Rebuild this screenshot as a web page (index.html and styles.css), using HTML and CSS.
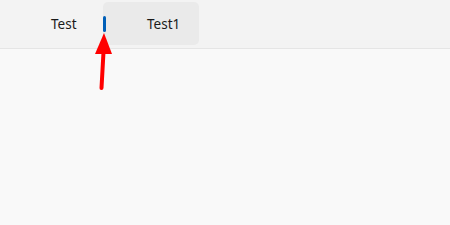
FILE: index.html
```html
<!DOCTYPE html>
<html lang="en">
<head>
    <meta charset="UTF-8">
    <title>Tabs</title>
    <link rel="stylesheet" href="styles.css">
</head>
<body>
    <div class="header">
        <div class="tab">Test</div>
        <div class="tab hover">Test1</div>
        <div class="drop-marker"></div>
    </div>
    <div class="content"></div>

    <svg class="arrow" width="30" height="70" viewBox="0 0 30 70">
        <path d="M16.5 20 L14.5 56" stroke="#ff0000" stroke-width="4" stroke-linecap="round" fill="none"/>
        <path d="M17 1 L8 22 L25 22 Z" fill="#ff0000"/>
    </svg>
</body>
</html>
```

FILE: styles.css
```css
body {
    margin: 0;
    font-family: "Noto Sans", "Open Sans", sans-serif;
    background-color: #f9f9f9;
    color: #1a1a1a;
}
.header {
    position: relative;
    display: flex;
    height: 46px;
    padding: 2px 0 0 7px;
    background-color: #f3f3f3;
    border-bottom: 1px solid #e5e5e5;
}
.tab {
    width: 96px;
    height: 43px;
    padding-left: 44px;
    box-sizing: border-box;
    display: flex;
    align-items: center;
    font-size: 13.5px;
    border-radius: 5px;
}
.tab.hover {
    background-color: #eaeaea;
}
.drop-marker {
    position: absolute;
    left: 103px;
    top: 16px;
    width: 3px;
    height: 16px;
    border-radius: 2px;
    background-color: #005fb8;
}
.content {
    height: 176px;
}
.arrow {
    position: absolute;
    left: 87px;
    top: 32px;
}
```
